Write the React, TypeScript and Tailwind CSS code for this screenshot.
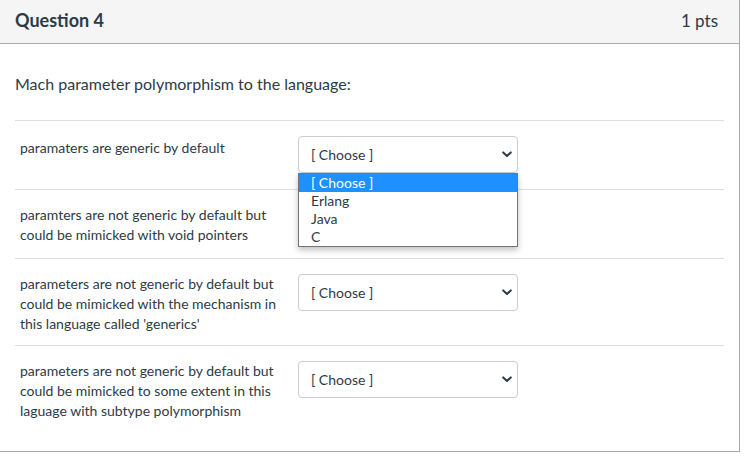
import React from "react";

const rows = [
  { text: "paramaters are generic by default", textPad: "pt-[2px]" },
  { text: "paramters are not generic by default but could be mimicked with void pointers", textPad: "" },
  { text: "parameters are not generic by default but could be mimicked with the mechanism in this language called 'generics'", textPad: "" },
  { text: "parameters are not generic by default but could be mimicked to some extent in this laguage with subtype polymorphism", textPad: "" },
];

const options = ["[ Choose ]", "Erlang", "Java", "C"];

function Chevron() {
  return (
    <svg width="10" height="7" viewBox="0 0 10 7" className="shrink-0">
      <path d="M1.2 1.4 L5 5 L8.8 1.4" fill="none" stroke="#2d3b45" strokeWidth="2" strokeLinecap="round" strokeLinejoin="round" />
    </svg>
  );
}

function ChooseSelect() {
  return (
    <div className="flex h-[37px] w-[220px] items-center justify-between rounded-[4px] border border-[#c7cdd1] bg-white pl-[12px] pr-[5px] text-[14px] text-[#2d3b45]">
      <span>[ Choose ]</span>
      <Chevron />
    </div>
  );
}

export default function App() {
  return (
    <div className="min-h-screen bg-white" style={{ fontFamily: "Lato, 'Noto Sans', sans-serif" }}>
      <div className="relative w-[740px] border-r border-b border-[#aaaaaa] bg-white text-[#2d3b45]">
        {/* Header */}
        <div className="flex h-[44px] items-center justify-between border-b border-[#aaaaaa] bg-[#f5f5f5] px-[15px] pb-[2px]">
          <span className="text-[18px] font-bold">Question 4</span>
          <span className="pr-[6px] text-[17px]">1 pts</span>
        </div>

        {/* Body */}
        <div className="px-[15px] pb-[19px]">
          <p className="pt-[28px] pb-[24px] text-[16px] leading-[24px]">Mach parameter polymorphism to the language:</p>

          {rows.map((row, i) => (
            <div key={i} className="flex border-t border-[#dddddd] pt-[15px] pb-[11px]">
              <div className={`w-[283px] pl-[5px] pr-[16px] text-[14px] leading-[20px] ${row.textPad}`}>{row.text}</div>
              <div className="pb-[5px]">
                <ChooseSelect />
              </div>
            </div>
          ))}
        </div>

        {/* Open dropdown list */}
        <div className="absolute left-[298px] top-[173px] w-[220px] border border-[#767676] bg-white text-[14px] leading-[18px] text-[#2d3b45] shadow-[0_3px_6px_rgba(0,0,0,0.25)]">
          {options.map((o, i) => (
            <div key={o} className={`h-[18px] pl-[12px] ${i === 0 ? "bg-[#1e90ff] text-white" : ""}`}>
              {o}
            </div>
          ))}
        </div>
      </div>
    </div>
  );
}
